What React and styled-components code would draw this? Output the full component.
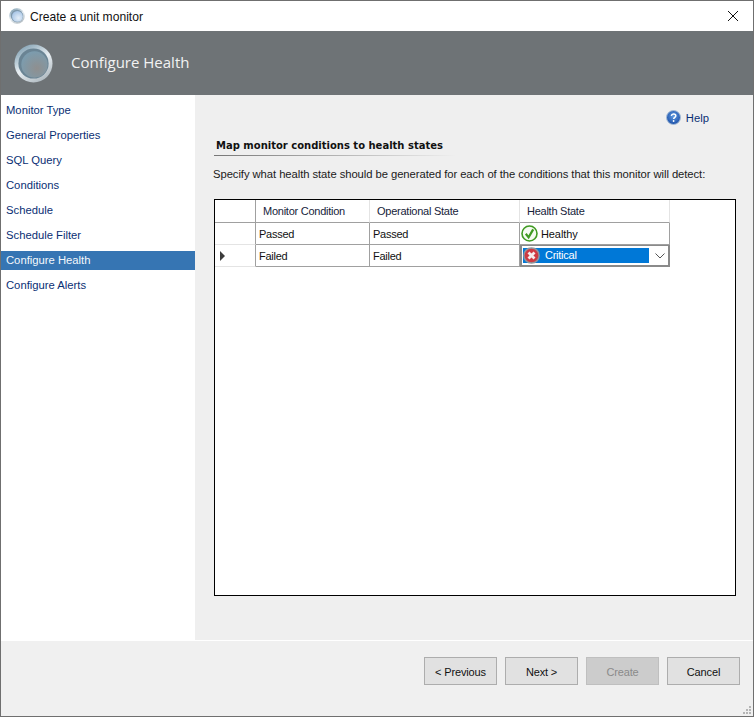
import React from "react";
import styled, { createGlobalStyle } from "styled-components";

const Global = createGlobalStyle`
  html, body { margin: 0; padding: 0; background: #fff; }
  #root { width: 754px; height: 717px; }
  * { box-sizing: border-box; }
`;

const Win = styled.div`
  width: 754px; height: 717px;
  border: 1px solid #6f6f6f;
  display: flex; flex-direction: column;
  font-family: "Liberation Sans", Arial, sans-serif;
  font-size: 11.25px;
  color: #111;
  background: #fff;
  overflow: hidden;
`;
const TitleBar = styled.div`
  height: 30px; flex: none;
  display: flex; align-items: center;
  padding: 0 14px 0 8px;
  gap: 5px;
  font-size: 12.1px;
  color: #111;
`;
const TitleText = styled.span`flex: 1; padding-top: 1px;`;
const Banner = styled.div`
  height: 64px; flex: none;
  background: #6e7376;
  display: flex; align-items: center;
  padding-left: 13px;
  gap: 18px;
  color: #f2f2f2;
  font-family: "Open Sans", "Liberation Sans", sans-serif;
  font-size: 15px;
  span { position: relative; top: -1px; }
`;
const Body = styled.div`flex: 1; display: flex; min-height: 0;`;
const Nav = styled.nav`
  width: 194px; flex: none;
  background: #fff;
  padding-top: 6px;
  display: flex; flex-direction: column;
  gap: 6px;
`;
const NavItem = styled.div`
  height: 19px;
  padding-left: 5px;
  line-height: 18px;
  color: ${p => (p.$active ? "#f4f8fc" : "#0a2f74")};
  background: ${p => (p.$active ? "#3675b3" : "transparent")};
`;
const Main = styled.main`
  flex: 1;
  background: #efefef;
  padding: 14px 17px 44px 19px;
  display: flex; flex-direction: column;
`;
const HelpRow = styled.div`
  display: flex; justify-content: flex-end; align-items: center;
  gap: 5px;
  padding-right: 27px;
  height: 17px;
  color: #0a2f74;
`;
const Heading = styled.div`
  margin-top: 11px;
  width: 212px;
  font-family: "DejaVu Sans", Verdana, sans-serif;
  font-weight: 700;
  font-size: 10px;
  color: #111;
  padding: 2px 0 4px 2px;
  height: 19px;
  white-space: nowrap;
  line-height: 13px;
  position: relative;
  &::after {
    content: "";
    position: absolute; left: 0; right: -30px; bottom: 0; height: 1px;
    background: linear-gradient(to right, #777, #efefef);
  }
`;
const Instr = styled.p`
  margin: 11px 0 0 -1px;
  line-height: 15px;
  color: #1a1a1a;
  white-space: nowrap;
  letter-spacing: -0.06px;
`;
const GridBox = styled.div`
  margin-top: 17px;
  flex: 1;
  border: 1px solid #000;
  background: #fff;
`;
const Table = styled.div`
  display: grid;
  width: 455px;
  grid-template-columns: 41px 114px 150px 150px;
  grid-template-rows: 23px 22px 22px;
  font-size: 11px;
  letter-spacing: -0.25px;
`;
const Cell = styled.div`
  border-right: 1px solid #a0a0a0;
  border-bottom: 1px solid #a0a0a0;
  display: flex; align-items: center;
  padding-left: 3px;
  color: #111;
  white-space: nowrap;
  overflow: hidden;
  background: #fff;
`;
const HeadCell = styled(Cell)`
  border-right: 1px solid #e4e4e4;
  border-bottom-color: #a0a0a0;
  padding-left: 7px;
  color: #16233a;
`;
const RowHead = styled.div`
  border-right: 1px solid #a0a0a0;
  border-bottom: 1px solid #e4e4e4;
  display: flex; align-items: center;
  padding-left: 5px;
  background: #fff;
`;
const CornerCell = styled(RowHead)`
  border-right: 1px solid #a0a0a0;
  border-bottom-color: #a0a0a0;
`;
const Arrow = styled.span`
  width: 0; height: 0;
  border-top: 5px solid transparent;
  border-bottom: 5px solid transparent;
  border-left: 5px solid #3c3c3c;
`;
const StateCell = styled(Cell)`
  padding-left: 1px;
  gap: 3px;
  letter-spacing: -0.1px;
`;
const ComboCell = styled.div`
  border: 2px solid #8a8a8a;
  border-top-width: 1px;
  display: flex; align-items: center;
  padding: 0 0 0 1px;
  background: #fff;
`;
const ComboValue = styled.div`
  width: 126px; height: 15px;
  background: #0078d7;
  color: #fff;
  display: flex; align-items: center;
  gap: 5px;
  line-height: 15px;
`;
const Chevron = styled.svg`margin-left: 6px; flex: none;`;
const Footer = styled.footer`
  height: 76px; flex: none;
  background: #f0f0f0;
  border-top: 1px solid #fff;
  display: flex; justify-content: flex-end; gap: 8px;
  padding: 16px 13px 0 0;
  position: relative;
  font-size: 11px;
  letter-spacing: -0.15px;
`;
const Btn = styled.div`
  width: 73px; height: 28px;
  background: ${p => (p.$disabled ? "#cccccc" : "#e1e1e1")};
  border: 1px solid ${p => (p.$disabled ? "#bfbfbf" : "#adadad")};
  color: ${p => (p.$disabled ? "#8a8a8a" : "#111")};
  display: flex; align-items: center; justify-content: center;
  padding-top: 1px;
`;
const Grip = styled.svg`position: absolute; right: 1px; bottom: 1px;`;

const Orb = ({ size }) => (
  <svg width={size} height={size} viewBox="0 0 40 40" style={{ flex: "none" }}>
    <defs>
      <linearGradient id={`r${size}`} x1="0.2" y1="0" x2="0.8" y2="1">
        <stop offset="0" stopColor="#7f9fb2" />
        <stop offset="0.5" stopColor="#e8eef2" />
        <stop offset="1" stopColor="#a9b4bb" />
      </linearGradient>
      <radialGradient id={`i${size}`} cx="0.6" cy="0.65" r="0.65">
        <stop offset="0" stopColor={size > 20 ? "#8f8f8f" : "#e4eef8"} />
        <stop offset="1" stopColor={size > 20 ? "#7c9cae" : "#a9c6e6"} />
      </radialGradient>
    </defs>
    <circle cx="20" cy="20" r="19.5" fill={`url(#r${size})`} />
    <circle cx="20" cy="20" r="15.5" fill={size > 20 ? "#6a8494" : "#7e98ac"} />
    <circle cx="21" cy="21" r="13.5" fill={`url(#i${size})`} />
  </svg>
);

const HelpIcon = () => (
  <svg width="15" height="15" viewBox="0 0 15 15">
    <defs>
      <radialGradient id="h" cx="0.5" cy="0.4" r="0.6">
        <stop offset="0" stopColor="#5f9be0" />
        <stop offset="1" stopColor="#1c4fa8" />
      </radialGradient>
    </defs>
    <circle cx="7.5" cy="7.5" r="7" fill="url(#h)" stroke="#a8bfd8" />
    <path d="M5.3 5.8c.2-1.3 1.2-1.9 2.3-1.9 1.3 0 2.2.8 2.2 1.8 0 1.6-2 1.6-2.1 3.3" fill="none" stroke="#fff" strokeWidth="1.5" />
    <circle cx="7.6" cy="11" r="0.9" fill="#fff" />
  </svg>
);

const HealthyIcon = () => (
  <svg width="17" height="17" viewBox="0 0 17 17" style={{ flex: "none" }}>
    <circle cx="8.5" cy="8.5" r="7.5" fill="#f6fbf2" stroke="#3f9a22" strokeWidth="1.6" />
    <path d="M4.8 8.8l2.8 3.6 4.6-8" fill="none" stroke="#3f9a22" strokeWidth="2.2" />
  </svg>
);

const CriticalIcon = () => (
  <svg width="17" height="17" viewBox="0 0 17 17" style={{ flex: "none", margin: "-1px 0" }}>
    <circle cx="8.5" cy="8.5" r="7.6" fill="#cf3a42" stroke="#8f959c" strokeWidth="1.5" />
    <path d="M5.5 5.5l6 6M11.5 5.5l-6 6" stroke="#f4ecec" strokeWidth="2.8" />
  </svg>
);

const navItems = ["Monitor Type", "General Properties", "SQL Query", "Conditions", "Schedule", "Schedule Filter", "Configure Health", "Configure Alerts"];

export default function App() {
  return (
    <>
      <Global />
      <Win>
        <TitleBar>
          <Orb size={16} />
          <TitleText>Create a unit monitor</TitleText>
          <svg width="12" height="12" viewBox="0 0 12 12"><path d="M1 1l10 10M11 1L1 11" stroke="#111" strokeWidth="1" fill="none" /></svg>
        </TitleBar>
        <Banner>
          <Orb size={39} />
          <span>Configure Health</span>
        </Banner>
        <Body>
          <Nav>
            {navItems.map(n => <NavItem key={n} $active={n === "Configure Health"}>{n}</NavItem>)}
          </Nav>
          <Main>
            <HelpRow><HelpIcon /><span>Help</span></HelpRow>
            <Heading>Map monitor conditions to health states</Heading>
            <Instr>Specify what health state should be generated for each of the conditions that this monitor will detect:</Instr>
            <GridBox>
              <Table>
                <CornerCell />
                <HeadCell>Monitor Condition</HeadCell>
                <HeadCell>Operational State</HeadCell>
                <HeadCell>Health State</HeadCell>
                <RowHead />
                <Cell>Passed</Cell>
                <Cell>Passed</Cell>
                <StateCell><HealthyIcon />Healthy</StateCell>
                <RowHead><Arrow /></RowHead>
                <Cell>Failed</Cell>
                <Cell>Failed</Cell>
                <ComboCell>
                  <ComboValue><CriticalIcon />Critical</ComboValue>
                  <Chevron width="10" height="6" viewBox="0 0 10 6"><path d="M.5.5L5 5 9.5.5" fill="none" stroke="#555" /></Chevron>
                </ComboCell>
              </Table>
            </GridBox>
          </Main>
        </Body>
        <Footer>
          <Btn>&lt; Previous</Btn>
          <Btn>Next &gt;</Btn>
          <Btn $disabled>Create</Btn>
          <Btn>Cancel</Btn>
          <Grip width="10" height="10" viewBox="0 0 10 10" fill="#b5b5b5">
            <rect x="7" y="1" width="2" height="2" /><rect x="4" y="4" width="2" height="2" /><rect x="7" y="4" width="2" height="2" />
            <rect x="1" y="7" width="2" height="2" /><rect x="4" y="7" width="2" height="2" /><rect x="7" y="7" width="2" height="2" />
          </Grip>
        </Footer>
      </Win>
    </>
  );
}
